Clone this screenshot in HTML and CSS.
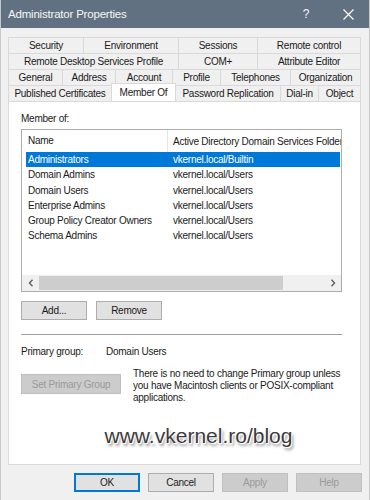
FILE: index.html
```html
<!DOCTYPE html>
<html lang="en">
  <head>
    <meta charset="UTF-8" />
    <title>Administrator Properties</title>
    <link rel="stylesheet" href="styles.css">
  </head>
  <body>
    <div class="window">
      <div class="titlebar">
        <span class="title">Administrator Properties</span>
        <span class="title-btn help">?</span>
        <span class="title-btn close">
          <svg width="11" height="11" viewBox="0 0 11 11"><path d="M0.5 0.5 L10.5 10.5 M10.5 0.5 L0.5 10.5" stroke="#fff" stroke-width="1.2" fill="none"/></svg>
        </span>
      </div>

      <div class="tabs">
        <div class="tab-row">
          <div class="tab" style="width:75px">Security</div>
          <div class="tab" style="width:95px">Environment</div>
          <div class="tab" style="width:79px">Sessions</div>
          <div class="tab grow">Remote control</div>
        </div>
        <div class="tab-row">
          <div class="tab" style="width:170px">Remote Desktop Services Profile</div>
          <div class="tab" style="width:79px">COM+</div>
          <div class="tab grow">Attribute Editor</div>
        </div>
        <div class="tab-row">
          <div class="tab" style="width:54px">General</div>
          <div class="tab" style="width:53px">Address</div>
          <div class="tab" style="width:57px">Account</div>
          <div class="tab" style="width:48px">Profile</div>
          <div class="tab" style="width:70px">Telephones</div>
          <div class="tab grow">Organization</div>
        </div>
        <div class="tab-row">
          <div class="tab" style="width:103px">Published Certificates</div>
          <div class="tab active" style="width:65px">Member Of</div>
          <div class="tab" style="width:104px">Password Replication</div>
          <div class="tab" style="width:38px">Dial-in</div>
          <div class="tab grow">Object</div>
        </div>
      </div>

      <div class="panel">
        <div class="label">Member of:</div>
        <div class="listbox">
          <div class="list-head">
            <div class="col-name">Name</div>
            <div class="col-folder">Active Directory Domain Services Folder</div>
          </div>
          <div class="list-rows">
            <div class="row selected"><span class="col-name">Administrators</span><span class="col-folder">vkernel.local/Builtin</span></div>
            <div class="row"><span class="col-name">Domain Admins</span><span class="col-folder">vkernel.local/Users</span></div>
            <div class="row"><span class="col-name">Domain Users</span><span class="col-folder">vkernel.local/Users</span></div>
            <div class="row"><span class="col-name">Enterprise Admins</span><span class="col-folder">vkernel.local/Users</span></div>
            <div class="row"><span class="col-name">Group Policy Creator Owners</span><span class="col-folder">vkernel.local/Users</span></div>
            <div class="row"><span class="col-name">Schema Admins</span><span class="col-folder">vkernel.local/Users</span></div>
          </div>
          <div class="hscroll">
            <span class="arrow">
              <svg width="6" height="8" viewBox="0 0 6 8"><path d="M4.5 0.8 L1.5 4 L4.5 7.2" stroke="#606060" stroke-width="1.4" fill="none"/></svg>
            </span>
            <div class="track"><div class="thumb"></div></div>
            <span class="arrow">
              <svg width="6" height="8" viewBox="0 0 6 8"><path d="M1.5 0.8 L4.5 4 L1.5 7.2" stroke="#606060" stroke-width="1.4" fill="none"/></svg>
            </span>
          </div>
        </div>

        <div class="btn-row">
          <button class="btn">Add...</button>
          <button class="btn">Remove</button>
        </div>

        <div class="divider"></div>

        <div class="primary">
          <span class="primary-label">Primary group:</span>
          <span>Domain Users</span>
        </div>

        <div class="set-primary">
          <button class="btn btn-disabled wide">Set Primary Group</button>
          <p class="note">There is no need to change Primary group unless you have Macintosh clients or POSIX-compliant applications.</p>
        </div>

        <div class="watermark">www.vkernel.ro/blog</div>
      </div>

      <div class="footer">
        <button class="btn default">OK</button>
        <button class="btn">Cancel</button>
        <button class="btn btn-disabled">Apply</button>
        <button class="btn btn-disabled">Help</button>
      </div>
    </div>
  </body>
</html>
```

FILE: styles.css
```css
* {
  margin: 0;
  padding: 0;
  box-sizing: border-box;
}

body {
  width: 370px;
  height: 500px;
  overflow: hidden;
  background-color: #f0f0f0;
  font-family: "Liberation Sans", Arial, sans-serif;
  font-size: 10px;
  letter-spacing: -0.25px;
  color: #1a1a1a;
}

.window {
  height: 500px;
  border-left: 1px solid #c8c8c8;
  border-right: 1px solid #c8c8c8;
}

.titlebar {
  height: 28px;
  background-color: #627182;
  color: #f4f6f8;
  display: flex;
  align-items: center;
  padding: 0 0 0 7px;
}

.title {
  flex: 1;
  font-size: 11.5px;
  letter-spacing: -0.2px;
}

.title-btn {
  width: 38px;
  text-align: center;
  font-size: 12px;
}

.help {
  margin-right: 4px;
}

.close {
  display: flex;
  justify-content: center;
  margin-right: 2px;
}

.tabs {
  margin: 9px 8px 0 7px;
}

.tab-row {
  display: flex;
  height: 16px;
}

.tab {
  flex-shrink: 0;
  border: 1px solid #d9d9d9;
  border-right: none;
  border-bottom: none;
  background-color: #f0f0f0;
  text-align: center;
  line-height: 15px;
  white-space: nowrap;
  overflow: hidden;
}

.tab.grow {
  flex: 1;
  border-right: 1px solid #d9d9d9;
}

.tab.active {
  background-color: #fff;
  height: 18px;
  margin-top: -2px;
  line-height: 17px;
  border-right: 1px solid #d9d9d9;
  position: relative;
  z-index: 1;
}

.tab.active + .tab {
  border-left: none;
}

.panel {
  margin: 0 8px 0 7px;
  height: 364px;
  background-color: #fff;
  border: 1px solid #d9d9d9;
  padding: 11px 12px 0 12px;
}

.label {
  height: 16px;
}

.listbox {
  width: 321px;
  height: 163px;
  border: 1px solid #adadad;
  display: flex;
  flex-direction: column;
}

.list-head {
  display: flex;
  height: 22px;
  align-items: center;
  white-space: nowrap;
  overflow: hidden;
}

.list-head .col-name {
  flex: 0 0 146px;
  padding-left: 6px;
  border-right: 1px solid #e5e5e5;
  height: 22px;
  line-height: 22px;
}

.list-head .col-folder {
  flex-shrink: 0;
  padding-left: 5px;
}

.list-rows {
  flex: 1;
  padding: 0 1px 0 4px;
}

.row {
  display: flex;
  height: 15.3px;
  line-height: 15.3px;
  white-space: nowrap;
}

.row .col-name {
  flex: 0 0 147px;
  padding-left: 2px;
}

.row.selected {
  background-color: #0078d7;
  color: #fff;
}

.hscroll {
  height: 16px;
  display: flex;
  align-items: center;
  background-color: #f0f0f0;
}

.arrow {
  width: 17px;
  display: flex;
  justify-content: center;
}

.track {
  flex: 1;
  height: 16px;
  display: flex;
  align-items: center;
}

.thumb {
  width: 244px;
  height: 14px;
  background-color: #cdcdcd;
}

.btn-row {
  display: flex;
  gap: 9px;
  margin-top: 9px;
}

.btn {
  font-family: inherit;
  font-size: 10px;
  letter-spacing: -0.25px;
  color: #1a1a1a;
  width: 66px;
  height: 19px;
  background-color: #e1e1e1;
  border: 1px solid #adadad;
}

.btn-disabled {
  background-color: #cccccc;
  border-color: #bfbfbf;
  color: #9a9a9a;
}

.divider {
  width: 321px;
  height: 1px;
  background-color: #a0a0a0;
  margin-top: 14px;
}

.primary {
  display: flex;
  margin-top: 11px;
  height: 14px;
}

.primary-label {
  width: 85px;
}

.set-primary {
  display: flex;
  gap: 12px;
  margin-top: 8px;
}

.btn.wide {
  width: 100px;
  height: 20px;
  margin-top: 6px;
}

.note {
  width: 215px;
  line-height: 12px;
}

.watermark {
  margin-top: 20px;
  text-align: center;
  padding-left: 28px;
  font-size: 21px;
  letter-spacing: 0;
  color: #3b3b3b;
  text-shadow: 0 0 2px #fff, 1px 1px 0 #fff, -1px -1px 0 #fff, 2px 3px 3px #8a8a8a;
}

.footer {
  display: flex;
  justify-content: flex-end;
  gap: 8px;
  padding: 8px 7px 0 0;
}

.btn.default {
  border: 2px solid #0078d7;
}
```
